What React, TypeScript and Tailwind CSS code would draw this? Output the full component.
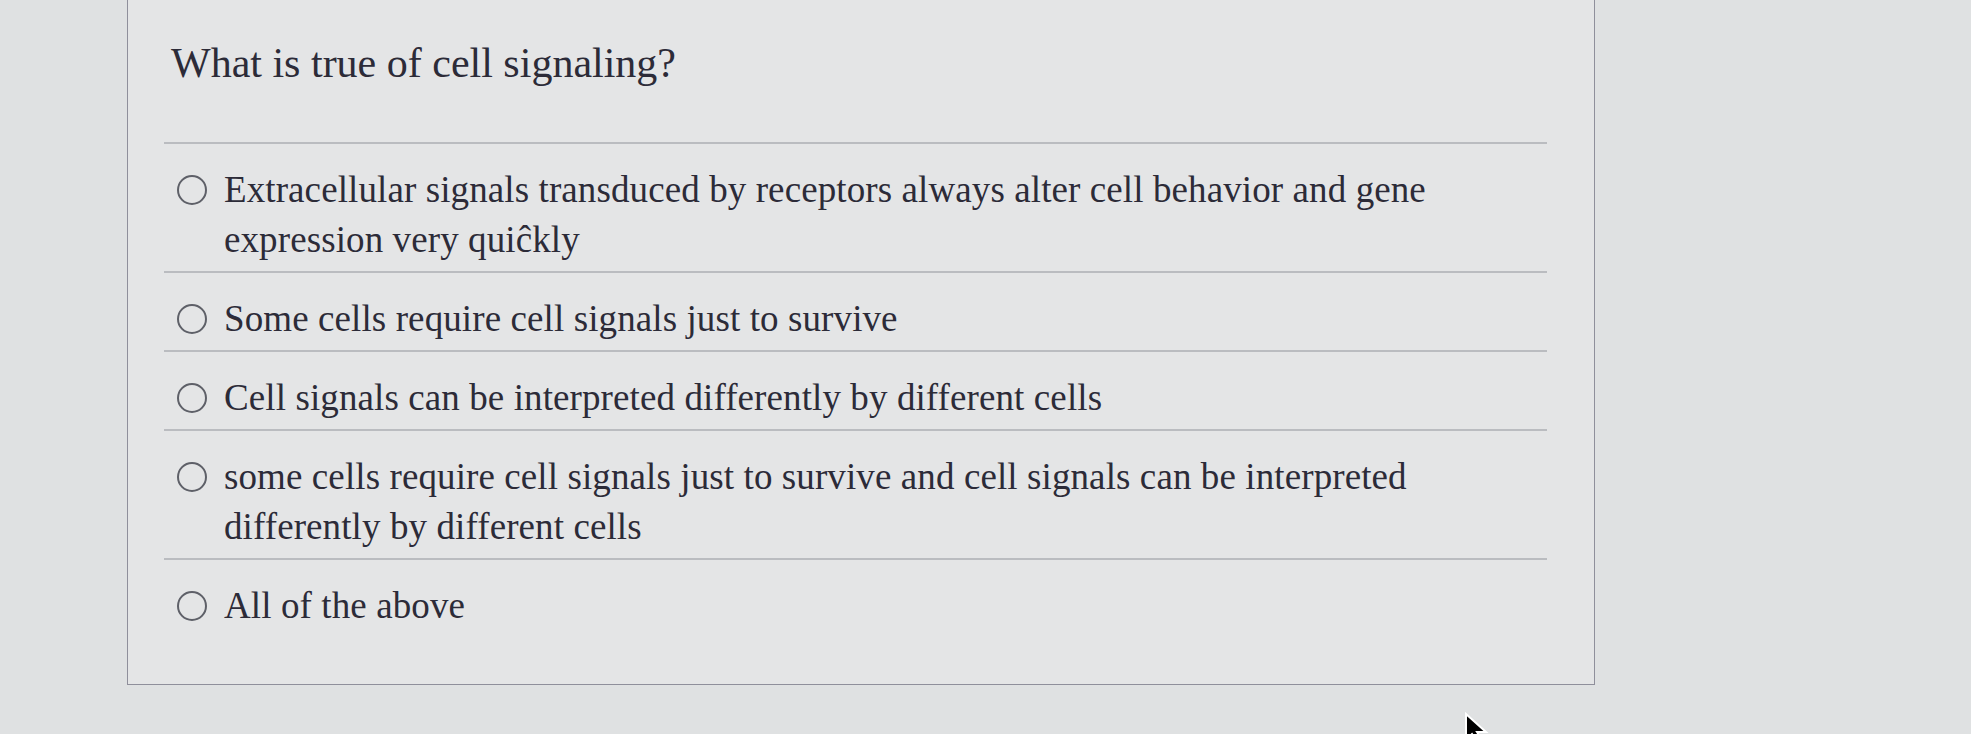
import React from "react";

const options = [
  "Extracellular signals transduced by receptors always alter cell behavior and gene expression very quiĉkly",
  "Some cells require cell signals just to survive",
  "Cell signals can be interpreted differently by different cells",
  "some cells require cell signals just to survive and cell signals can be interpreted differently by different cells",
  "All of the above",
];

function Radio() {
  return (
    <span className="mt-[10px] h-[30px] w-[30px] shrink-0 rounded-full border-[2.5px] border-[#5e6068]" />
  );
}

export default function App() {
  return (
    <div
      className="relative h-[734px] w-[1971px] overflow-hidden bg-[#dfe1e2] text-[#2c2b38]"
      style={{ fontFamily: '"Liberation Serif", "DejaVu Serif", serif' }}
    >
      <div className="ml-[127px] flex h-[685px] w-[1468px] flex-col border border-t-0 border-[#8f8f9b] bg-[#e4e5e6] pl-[36px] pr-[47px]">
        <h1 className="mt-[38px] pl-[7px] text-[42px] leading-[50px]">
          What is true of cell signaling?
        </h1>
        <div className="mt-[54px] border-t-2 border-[#babcc0]" />
        {options.map((text, i) => (
          <React.Fragment key={i}>
            <div className="flex gap-[17px] pl-[13px] pt-[21px] pb-[6px]">
              <Radio />
              <span className="max-w-[1225px] text-[37px] leading-[50px] tracking-[0.1px]">
                {text}
              </span>
            </div>
            {i < options.length - 1 && (
              <div className="border-t-2 border-[#babcc0]" />
            )}
          </React.Fragment>
        ))}
      </div>
      <svg
        className="absolute left-[1462px] top-[712px]"
        width="30"
        height="30"
        viewBox="0 0 30 30"
      >
        <path d="M4 2 L4 28 L10 22 L15 30 L20 28 L15 20 L24 20 Z" fill="#000" stroke="#fff" strokeWidth="2" />
      </svg>
    </div>
  );
}
